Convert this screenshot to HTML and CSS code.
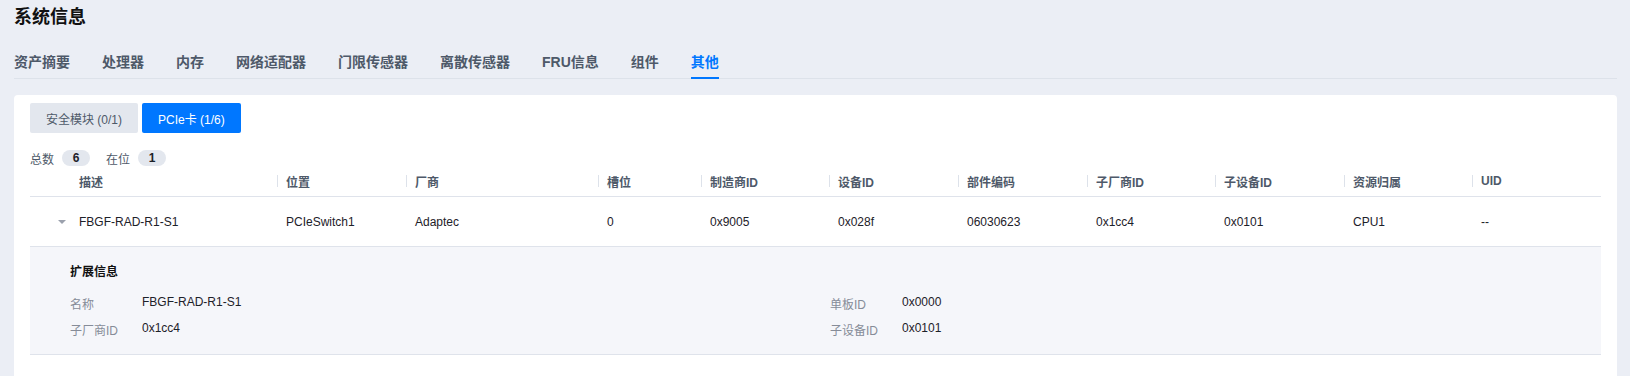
FILE: index.html
```html
<!DOCTYPE html>
<html lang="zh-CN">
<head>
    <meta charset="UTF-8">
    <meta name="viewport" content="width=device-width, initial-scale=1.0">
    <title>系统信息</title>
    <link rel="stylesheet" href="styles.css">
</head>
<body>
    <h1 class="page-title">系统信息</h1>

    <nav class="tabs">
        <a class="tab">资产摘要</a>
        <a class="tab">处理器</a>
        <a class="tab">内存</a>
        <a class="tab">网络适配器</a>
        <a class="tab">门限传感器</a>
        <a class="tab">离散传感器</a>
        <a class="tab">FRU信息</a>
        <a class="tab">组件</a>
        <a class="tab active">其他</a>
    </nav>

    <section class="card">
        <div class="seg">
            <button class="seg-btn">安全模块 (0/1)</button>
            <button class="seg-btn active">PCIe卡 (1/6)</button>
        </div>

        <div class="counts">
            <span class="count-label">总数</span>
            <span class="badge">6</span>
            <span class="count-label">在位</span>
            <span class="badge">1</span>
        </div>

        <div class="table">
            <div class="row head">
                <div class="cell"></div>
                <div class="cell first">描述</div>
                <div class="cell"><i class="sep"></i>位置</div>
                <div class="cell"><i class="sep"></i>厂商</div>
                <div class="cell"><i class="sep"></i>槽位</div>
                <div class="cell"><i class="sep"></i>制造商ID</div>
                <div class="cell"><i class="sep"></i>设备ID</div>
                <div class="cell"><i class="sep"></i>部件编码</div>
                <div class="cell"><i class="sep"></i>子厂商ID</div>
                <div class="cell"><i class="sep"></i>子设备ID</div>
                <div class="cell"><i class="sep"></i>资源归属</div>
                <div class="cell"><i class="sep"></i>UID</div>
            </div>

            <div class="row data">
                <div class="cell toggle"><i class="caret"></i></div>
                <div class="cell">FBGF-RAD-R1-S1</div>
                <div class="cell">PCIeSwitch1</div>
                <div class="cell">Adaptec</div>
                <div class="cell">0</div>
                <div class="cell">0x9005</div>
                <div class="cell">0x028f</div>
                <div class="cell">06030623</div>
                <div class="cell">0x1cc4</div>
                <div class="cell">0x0101</div>
                <div class="cell">CPU1</div>
                <div class="cell">--</div>
            </div>

            <div class="expand">
                <h3 class="expand-title">扩展信息</h3>
                <div class="info">
                    <div class="info-item"><span class="info-label">名称</span><span class="info-value">FBGF-RAD-R1-S1</span></div>
                    <div class="info-item"><span class="info-label">单板ID</span><span class="info-value">0x0000</span></div>
                    <div class="info-item"><span class="info-label">子厂商ID</span><span class="info-value">0x1cc4</span></div>
                    <div class="info-item"><span class="info-label">子设备ID</span><span class="info-value">0x0101</span></div>
                </div>
            </div>
        </div>
    </section>
</body>
</html>
```

FILE: styles.css
```css
* {
    box-sizing: border-box;
    margin: 0;
    padding: 0;
}

body {
    font-family: "Liberation Sans", "Noto Sans CJK SC", sans-serif;
    font-size: 12px;
    background: #ebeef5;
    color: #1d2129;
    padding: 5px 13px 0 14px;
    overflow: hidden;
}

.page-title {
    font-size: 18px;
    line-height: 24px;
    font-weight: 700;
    color: #111;
}

/* tabs */

.tabs {
    display: flex;
    gap: 32px;
    margin-top: 23px;
    border-bottom: 1px solid #dde2ea;
}

.tab {
    position: relative;
    font-size: 14px;
    line-height: 20px;
    font-weight: 700;
    color: #4e5969;
    padding-bottom: 6px;
}

.tab.active {
    color: #0077ff;
}

.tab.active::after {
    content: "";
    position: absolute;
    left: 0;
    right: 0;
    bottom: -1px;
    height: 2px;
    background: #0077ff;
}

/* card */

.card {
    margin-top: 16px;
    background: #fff;
    border-radius: 4px;
    padding: 8px 16px 30px;
}

.seg {
    display: flex;
    gap: 4px;
}

.seg-btn {
    height: 30px;
    padding: 0 16px;
    border: none;
    border-radius: 2px;
    background: #e3e7ee;
    color: #4e5969;
    font-family: inherit;
    font-size: 12px;
}

.seg-btn.active {
    background: #0077ff;
    color: #fff;
}

.counts {
    display: flex;
    align-items: center;
    margin-top: 17px;
    height: 16px;
}

.count-label {
    color: #4e5969;
    margin-right: 8px;
}

.badge {
    width: 28px;
    height: 16px;
    line-height: 16px;
    border-radius: 8px;
    background: #e3e7ee;
    text-align: center;
    font-weight: 700;
    color: #1d2129;
    margin-right: 16px;
}

/* table */

.row {
    display: grid;
    grid-template-columns: 40px 207px 129px 192px 103px 128px 129px 129px 128px 129px 128px 130px;
    border-bottom: 1px solid #dfe3eb;
}

.head {
    height: 31px;
}

.head .cell {
    display: flex;
    align-items: center;
    gap: 8px;
    font-weight: 700;
    color: #4e5969;
}

.head .cell.first {
    padding-left: 9px;
}

.sep {
    width: 1px;
    height: 12px;
    background: #dde2ea;
}

.data {
    height: 50px;
}

.data .cell {
    display: flex;
    align-items: center;
    padding-left: 9px;
}

.data .cell.toggle {
    padding-left: 28px;
}

.caret {
    width: 0;
    height: 0;
    border-left: 4px solid transparent;
    border-right: 4px solid transparent;
    border-top: 4px solid #9ba1ad;
}

.expand {
    background: #f5f6fa;
    border-bottom: 1px solid #dfe3eb;
    padding: 15px 40px 12px;
}

.expand-title {
    font-size: 12px;
    line-height: 20px;
    font-weight: 700;
    color: #111;
}

.info {
    display: grid;
    grid-template-columns: 760px 1fr;
    row-gap: 4px;
    margin-top: 12px;
}

.info-item {
    display: flex;
    align-items: flex-start;
}

.info-label {
    width: 72px;
    line-height: 22px;
    color: #868c98;
}

.info-value {
    line-height: 16px;
    color: #1d2129;
}
```
